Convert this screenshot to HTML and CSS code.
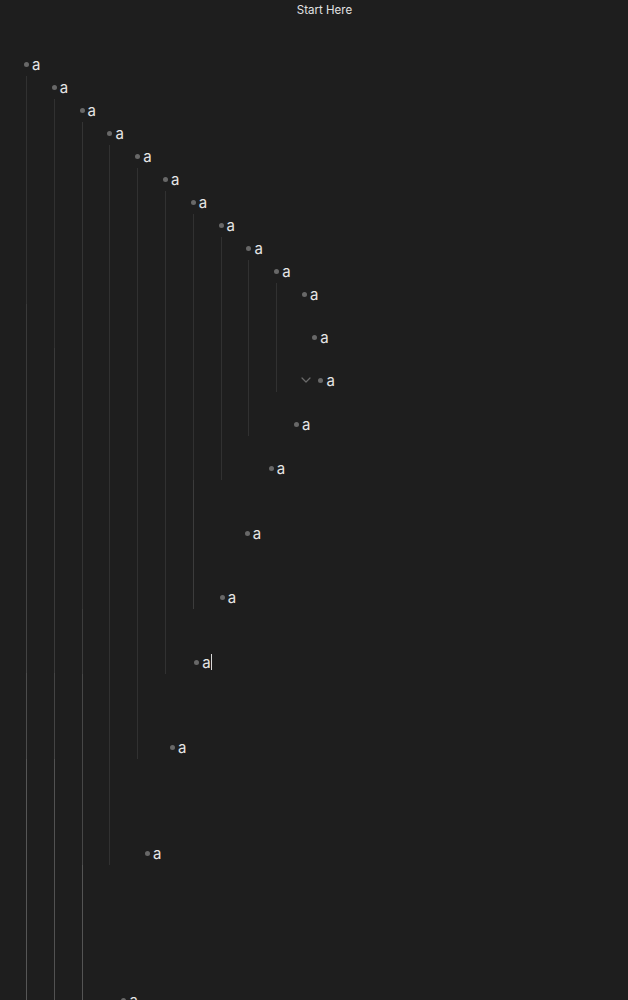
FILE: index.html
```html
<!DOCTYPE html>
<html lang="en">
<head>
<meta charset="utf-8">
<title>Start Here</title>
<link rel="stylesheet" href="styles.css">
</head>
<body>
<header class="titlebar">Start Here</header>
<ul class="outline">
  <li class="item">
    <div class="row"><span class="dot"></span><span class="txt">a</span></div>
    <ul class="children g1">
      <li class="item">
        <div class="row"><span class="dot"></span><span class="txt">a</span></div>
        <ul class="children g2">
          <li class="item">
            <div class="row"><span class="dot"></span><span class="txt">a</span></div>
            <ul class="children g3">
              <li class="item">
                <div class="row"><span class="dot"></span><span class="txt">a</span></div>
                <ul class="children g4">
                  <li class="item">
                    <div class="row"><span class="dot"></span><span class="txt">a</span></div>
                    <ul class="children g5">
                      <li class="item">
                        <div class="row"><span class="dot"></span><span class="txt">a</span></div>
                        <ul class="children g6">
                          <li class="item">
                            <div class="row"><span class="dot"></span><span class="txt">a</span></div>
                            <ul class="children g7">
                              <li class="item">
                                <div class="row"><span class="dot"></span><span class="txt">a</span></div>
                                <ul class="children g8">
                                  <li class="item">
                                    <div class="row"><span class="dot"></span><span class="txt">a</span></div>
                                    <ul class="children g9">
                                      <li class="item">
                                        <div class="row"><span class="dot"></span><span class="txt">a</span></div>
                                        <ul class="children g10">
                                          <li class="item">
                                            <div class="row"><span class="dot"></span><span class="txt">a</span></div>
                                          </li>
                                          <li class="item i12">
                                            <div class="row"><span class="dot"></span><span class="txt">a</span></div>
                                          </li>
                                          <li class="item i13">
                                            <div class="row">
                                              <svg class="fold" width="10" height="6" viewBox="0 0 10 6"><polyline points="1,1 5,5 9,1" fill="none" stroke="#6a6a6a" stroke-width="1.2" stroke-linecap="round" stroke-linejoin="round"/></svg>
                                              <span class="dot"></span><span class="txt">a</span>
                                            </div>
                                          </li>
                                        </ul>
                                      </li>
                                      <li class="item i14">
                                        <div class="row"><span class="dot"></span><span class="txt">a</span></div>
                                      </li>
                                    </ul>
                                  </li>
                                  <li class="item i15">
                                    <div class="row"><span class="dot"></span><span class="txt">a</span></div>
                                  </li>
                                </ul>
                              </li>
                              <li class="item i16">
                                <div class="row"><span class="dot"></span><span class="txt">a</span></div>
                              </li>
                              <li class="item i17">
                                <div class="row"><span class="dot"></span><span class="txt">a</span></div>
                              </li>
                            </ul>
                          </li>
                          <li class="item i18">
                            <div class="row"><span class="dot"></span><span class="txt">a</span><span class="caret"></span></div>
                          </li>
                        </ul>
                      </li>
                      <li class="item i19">
                        <div class="row"><span class="dot"></span><span class="txt">a</span></div>
                      </li>
                    </ul>
                  </li>
                  <li class="item i20">
                    <div class="row"><span class="dot"></span><span class="txt">a</span></div>
                  </li>
                </ul>
              </li>
              <li class="item i21">
                <div class="row"><span class="dot"></span><span class="txt">a</span></div>
              </li>
            </ul>
          </li>
        </ul>
      </li>
    </ul>
  </li>
</ul>
</body>
</html>
```

FILE: styles.css
```css
html, body {
  margin: 0;
  padding: 0;
  background: #1e1e1e;
}

body {
  font-family: Inter, "Noto Sans", "Liberation Sans", sans-serif;
  color: #dcdcdc;
  min-height: 1000px;
}

.titlebar {
  height: 19px;
  padding-top: 1px;
  line-height: 18px;
  font-size: 11.5px;
  color: #e2e2e2;
  text-align: center;
  padding-left: 21px;
}

.outline {
  list-style: none;
  margin: 32.8px 0 0 0;
  padding: 0 0 0 26px;
}

.children {
  list-style: none;
  margin: 0;
  padding: 0 0 0 27.8px;
  background-repeat: no-repeat;
  background-position: 0 0;
  background-size: 1px 100%;
  background-image: linear-gradient(#313131, #313131);
}

.item {
  margin: 0;
  padding: 0;
}

.row {
  position: relative;
  display: flex;
  align-items: center;
  height: 23px;
}

.dot {
  flex: none;
  width: 5px;
  height: 5px;
  border-radius: 50%;
  background: #686868;
  margin-left: -2px;
}

.txt {
  margin-left: 3px;
  font-size: 15px;
  line-height: 23px;
  color: #e6e6e6;
}

.caret {
  flex: none;
  width: 1px;
  height: 16px;
  margin-left: 0.5px;
  background: #d8d8d8;
}

.fold {
  position: absolute;
  left: -19px;
  top: calc(50% - 3px);
}

/* guide brightness (overlapping guides) */
.g1 {
  background-image: linear-gradient(to bottom,
    #313131 0 228px,
    #3a3a3a 228px 404px,
    #434343 404px 597px,
    #4c4c4c 597px 683px,
    #565656 683px);
}
.g2 {
  background-image: linear-gradient(to bottom,
    #313131 0 249px,
    #3a3a3a 249px 574px,
    #444444 574px 660px,
    #525252 660px);
}
.g3 {
  background-image: linear-gradient(to bottom,
    #343434 0 487px,
    #3d3d3d 487px 552px,
    #474747 552px 743px,
    #545454 743px);
}
.g7 {
  background-image: linear-gradient(to bottom,
    #313131 0 266px,
    #3c3c3c 266px);
}

/* drifting rows */
.i12 { margin: 20px 0 0 10.2px; }
.i13 { margin: 20px 0 0 16.5px; }
.i14 { margin: 21px 0 0 19.8px; }
.i15 { margin: 21px 0 0 22.4px; }
.i16 { margin: 42px 0 0 26.1px; }
.i17 { margin: 41px 0 0 1.1px; }
.i18 { margin: 42px 0 0 3.5px; }
.i19 { margin: 62px 0 0 7px; }
.i20 { margin: 83px 0 0 9.8px; }
.i21 { margin: 124px 0 0 14.1px; }
```
